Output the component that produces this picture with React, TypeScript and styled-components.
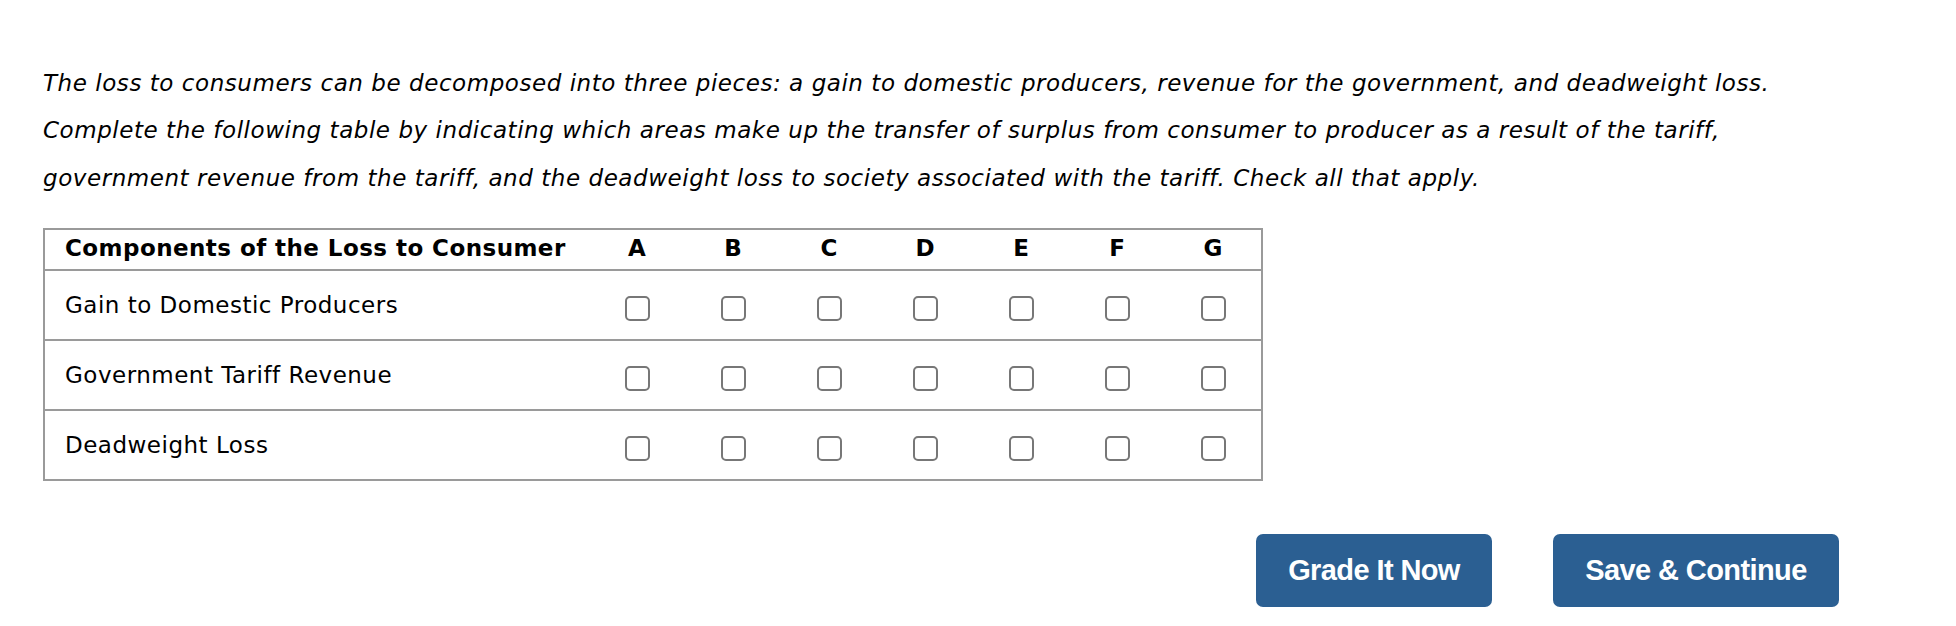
import React from "react";
import styled, { createGlobalStyle } from "styled-components";

const GlobalStyle = createGlobalStyle`
  html, body { margin: 0; padding: 0; background: #fff; }
  body { font-family: "DejaVu Sans", Verdana, sans-serif; color: #000; }
`;

const Page = styled.div`
  padding: 60px 117px 0 43px;
  display: flex;
  flex-direction: column;
`;

const Prompt = styled.p`
  margin: 0;
  font-style: italic;
  font-size: 23px;
  letter-spacing: 0.55px;
  line-height: 47.4px;
  white-space: nowrap;
`;

const Table = styled.table`
  margin-top: 26px;
  width: 1217px;
  border-collapse: collapse;
  border: 2px solid #9a9a9a;
  table-layout: fixed;
`;

const HeadCell = styled.th<{ $first?: boolean }>`
  height: 36px;
  padding: 0 0 3px 0;
  padding-left: ${(p) => (p.$first ? "20px" : "0")};
  text-align: ${(p) => (p.$first ? "left" : "center")};
  font-size: 23px;
  letter-spacing: ${(p) => (p.$first ? "0.45px" : "0")};
  font-weight: bold;
  width: ${(p) => (p.$first ? "524px" : "96px")};
  border-bottom: 2px solid #9a9a9a;
  white-space: nowrap;
`;

const Row = styled.tr`
  border-bottom: 2px solid #9a9a9a;
`;

const LabelCell = styled.td`
  height: 68px;
  padding: 0 0 0 20px;
  font-size: 23px;
  letter-spacing: 0.5px;
  text-align: left;
  vertical-align: middle;
  white-space: nowrap;
`;

const BoxCell = styled.td`
  text-align: center;
  vertical-align: middle;
  padding: 0;
`;

const Box = styled.input.attrs({ type: "checkbox" })`
  appearance: none;
  -webkit-appearance: none;
  margin: 6px 0 0 0;
  width: 25px;
  height: 25px;
  border: 2px solid #777;
  border-radius: 5px;
  background: #fff;
  box-sizing: border-box;
  vertical-align: middle;
  cursor: pointer;
`;

const Actions = styled.div`
  display: flex;
  justify-content: flex-end;
  gap: 61px;
  margin-top: 53px;
`;

const Button = styled.button<{ $w: number }>`
  width: ${(p) => p.$w}px;
  height: 73px;
  border: none;
  border-radius: 7px;
  background: #2b5f92;
  color: #fff;
  font-family: "Liberation Sans", Arial, sans-serif;
  font-weight: bold;
  font-size: 29px;
  letter-spacing: -0.6px;
  cursor: pointer;
`;

const letters = ["A", "B", "C", "D", "E", "F", "G"];
const rows = ["Gain to Domestic Producers", "Government Tariff Revenue", "Deadweight Loss"];

export default function App() {
  return (
    <>
      <GlobalStyle />
      <Page>
        <Prompt>
          The loss to consumers can be decomposed into three pieces: a gain to domestic producers, revenue for the government, and deadweight loss.
          <br />
          Complete the following table by indicating which areas make up the transfer of surplus from consumer to producer as a result of the tariff,
          <br />
          government revenue from the tariff, and the deadweight loss to society associated with the tariff. Check all that apply.
        </Prompt>
        <Table>
          <thead>
            <tr>
              <HeadCell $first>Components of the Loss to Consumer</HeadCell>
              {letters.map((l) => (
                <HeadCell key={l}>{l}</HeadCell>
              ))}
            </tr>
          </thead>
          <tbody>
            {rows.map((r) => (
              <Row key={r}>
                <LabelCell>{r}</LabelCell>
                {letters.map((l) => (
                  <BoxCell key={l}>
                    <Box aria-label={`${r} ${l}`} />
                  </BoxCell>
                ))}
              </Row>
            ))}
          </tbody>
        </Table>
        <Actions>
          <Button $w={236}>Grade It Now</Button>
          <Button $w={286}>Save &amp; Continue</Button>
        </Actions>
      </Page>
    </>
  );
}
